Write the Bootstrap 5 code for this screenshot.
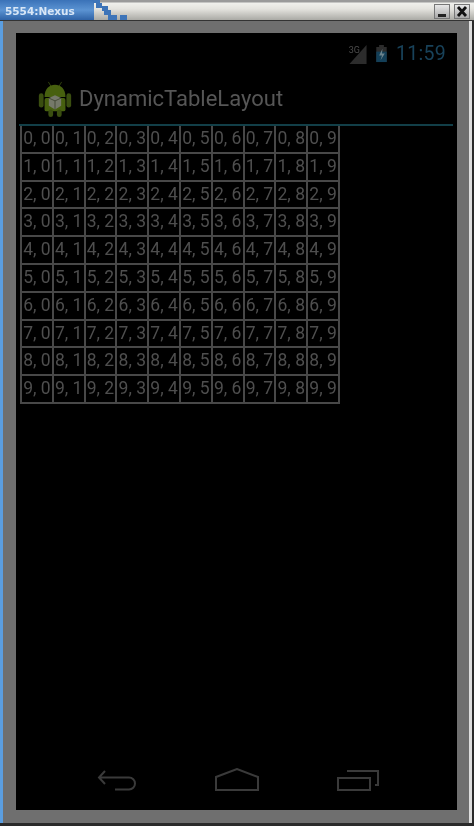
<!DOCTYPE html>
<html lang="en">
<head>
  <meta charset="UTF-8" />
  <title>5554:Nexus</title>
  <link href="https://cdn.jsdelivr.net/npm/bootstrap@5.3.3/dist/css/bootstrap.min.css" rel="stylesheet" />
  <style>
    html, body { height: 100%; }
    body { background: #2a2a2a; font-family: Roboto, "Liberation Sans", sans-serif; overflow: hidden; }
    .emu-window { width: 474px; height: 826px; }
    .titlebar { height: 21px; background: linear-gradient(#9a9a9a 0, #9a9a9a 2px, #f0f0ec 3px, #e4e3de 45%, #aaaaa5); border-bottom: 1px solid #333; position: relative; }
    .title-tab { width: 94px; background: linear-gradient(#3a72b8, #5b93d2 50%, #2f62a5); color: #d8e6f6; font: bold 10.5px "DejaVu Sans", sans-serif; padding: 5px 0 0 5px; filter: blur(.3px); }
    .notch { position: absolute; height: 5px; background: #3d74b8; }
    .win-btn { width: 16px; height: 15px; background: linear-gradient(#e8e8e8, #a8a8a8); border: 1px solid #777; color: #111; }
    .frame-wrap { background: #6f6f6f; border-left: 3px solid #5b9ee0; border-right: 3px solid #ddd; padding: 12px 12px 13px 13px; margin: 0 2px 3px 0; min-height: 0; }
    .screen { background: #000; height: 100%; filter: blur(.4px); }
    .statusrow { height: 40px; padding: 2px 11px 0 0; }
    .clock { font-size: 19.5px; line-height: 28px; color: #18425a; letter-spacing: .3px; }
    .tag-3g { font-size: 9px; color: #4c4c4c; line-height: 1; align-self: flex-start; margin: 11px -19px 0 0; position: relative; }
    .actionbar { height: 51px; padding-left: 22px; }
    .app-name { font-size: 22px; color: #565656; margin-left: 7px; }
    .divider { height: 2px; background: #123f48; margin: 0 4px 0 3px; }
    .cell-grid { display: grid; grid-template-columns: repeat(10, 31.8px); grid-auto-rows: 27.8px; margin: 0 0 0 4px; width: max-content; border-left: 2px solid #484848; }
    .cell-item { border-right: 2px solid #484848; border-bottom: 2px solid #484848; color: #4e4e4e; font-size: 17.5px; line-height: 25px; text-align: center; white-space: nowrap; overflow: hidden; }
    .softkeys { height: 68px; padding: 0 78px 19px 81px; }
  </style>
</head>
<body>
<div class="emu-window d-flex flex-column">
  <div class="titlebar d-flex align-items-stretch flex-shrink-0">
    <div class="title-tab">5554:Nexus</div>
    <span class="notch" style="left:93px;top:0;width:7px;height:3px"></span>
    <span class="notch" style="left:96px;top:3px;width:6px"></span>
    <span class="notch" style="left:102px;top:6px;width:6px"></span>
    <span class="notch" style="left:104px;top:10px;width:7px"></span>
    <span class="notch" style="left:108px;top:15px;width:9px"></span>
    <span class="notch" style="left:120px;top:15px;width:7px"></span>
    <div class="ms-auto d-flex gap-1 me-1 align-items-start pt-1">
      <span class="win-btn d-flex align-items-end justify-content-center">
        <svg width="10" height="9" viewBox="0 0 10 9"><rect x="1" y="5" width="8" height="3" fill="#222"/></svg>
      </span>
      <span class="win-btn d-flex align-items-center justify-content-center">
        <svg width="12" height="11" viewBox="0 0 12 11"><path d="M2 1l8 9M10 1l-8 9" stroke="#111" stroke-width="2.800"/></svg>
      </span>
    </div>
  </div>
  <div class="frame-wrap flex-grow-1">
    <div class="screen d-flex flex-column">
      <div class="statusrow d-flex justify-content-end align-items-center gap-2">
        <span class="tag-3g">3G</span>
        <svg width="18" height="19" viewBox="0 0 18 20"><path d="M18 0V20H0z" fill="#2c2c2c"/></svg>
        <svg width="13" height="18" viewBox="0 0 13 19"><path d="M4 0h5v2h3v16H1V2h3z" fill="#2c2c2c"/><path d="M1 7h11v11H1z" fill="#133f58"/><path d="M7.500 4L4 11h3l-1.500 5L10 9H7z" fill="#6b838d"/></svg>
        <span class="clock">11:59</span>
      </div>
      <div class="actionbar d-flex align-items-center">
        <svg width="34" height="38" viewBox="0 0 34 40">
          <path d="M10 2l3 5M24 2l-3 5" stroke="#33430f" stroke-width="1"/>
          <path d="M6 18C6 9 11 5 17 5s11 4 11 13z" fill="#47600f"/>
          <rect x="6" y="19" width="22" height="14" rx="2" fill="#47600f"/>
          <rect x="0" y="14" width="5" height="15" rx="2.500" fill="#3a4e10"/>
          <rect x="29" y="14" width="5" height="15" rx="2.500" fill="#3a4e10"/>
          <rect x="10" y="31" width="5" height="8" rx="2.500" fill="#3a4e10"/>
          <rect x="19" y="31" width="5" height="8" rx="2.500" fill="#3a4e10"/>
          <path d="M17 16l6.500 3v8L17 31l-6.500-4v-8z" fill="#75796a"/>
          <path d="M10.500 19l6.500 3 6.500-3M17 22v9" stroke="#454a38" stroke-width="1" fill="none"/>
        </svg>
        <span class="app-name">DynamicTableLayout</span>
      </div>
      <div class="divider"></div>
      <div id="cellGrid" class="cell-grid"></div>
      <div class="softkeys mt-auto d-flex justify-content-between align-items-end">
        <svg width="40" height="21" viewBox="0 0 40 21" fill="none" stroke="#3a3a3a" stroke-width="2"><path d="M8 1L2 7.500 8 14M2 7.500H32a6 6 0 0 1 0 12H18"/></svg>
        <svg width="44" height="23" viewBox="0 0 44 23" fill="none" stroke="#3a3a3a" stroke-width="2"><path d="M1 9L22 1l21 8v13H1z"/></svg>
        <svg width="42" height="21" viewBox="0 0 42 21" fill="none" stroke="#3a3a3a" stroke-width="2"><path d="M1 8h32v12H1zM10 1h31v14h-3"/></svg>
      </div>
    </div>
  </div>
</div>
<script>
  const grid = document.getElementById("cellGrid");
  for (let r = 0; r < 10; r++) {
    for (let c = 0; c < 10; c++) {
      grid.insertAdjacentHTML("beforeend", `<div class="cell-item">${r}, ${c}</div>`);
    }
  }
</script>
</body>
</html>
